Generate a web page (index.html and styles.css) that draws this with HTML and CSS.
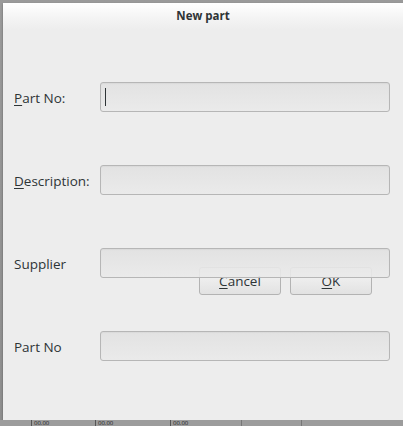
FILE: index.html
```html
<!DOCTYPE html>
<html>
<head>
<meta charset="utf-8">
<link rel="stylesheet" href="styles.css">
</head>
<body>
<div class="screen">
  <div class="dialog">
    <div class="titlebar">New part</div>
    <div class="form">
      <label class="label"><u>P</u>art No:</label>
      <div class="entry"><span class="caret"></span></div>
      <label class="label"><u>D</u>escription:</label>
      <div class="entry"></div>
      <label class="label">Supplier</label>
      <div class="entry"></div>
      <label class="label">Part No</label>
      <div class="entry"></div>
    </div>
    <div class="buttons">
      <div class="btn"><u>C</u>ancel</div>
      <div class="btn"><u>O</u>K</div>
    </div>
  </div>
  <div class="under">
    <span class="cell c1">00.00</span>
    <span class="cell c2">00.00</span>
    <span class="cell c3">00.00</span>
    <span class="cell c4"></span>
    <span class="cell c5"></span>
  </div>
</div>
</body>
</html>
```
FILE: styles.css
```css
html, body {
  margin: 0;
  padding: 0;
  width: 403px;
  height: 426px;
  overflow: hidden;
}
body {
  background: #8a8a8a;
  font-family: "Open Sans", "DejaVu Sans", sans-serif;
}
.screen {
  width: 403px;
  height: 426px;
  display: flex;
  flex-direction: column;
  background: linear-gradient(#9a9a9a, #8e8e8e);
}
.dialog {
  position: relative;
  margin: 3px 0 0 3px;
  width: 400px;
  height: 417px;
  background: #ededed;
  box-shadow: 0 1px 2px rgba(0,0,0,0.35);
  display: flex;
  flex-direction: column;
}
.titlebar {
  height: 25px;
  padding-bottom: 2px;
  display: flex;
  align-items: center;
  justify-content: center;
  font-weight: bold;
  font-size: 11.5px;
  color: #2e3436;
  background: linear-gradient(#ffffff, #f3f3f3 60%, #ededed);
}
.form {
  display: grid;
  grid-template-columns: 86px 290px;
  grid-auto-rows: 30px;
  row-gap: 53px;
  padding: 52px 0 0 11px;
  align-items: center;
}
.label {
  font-size: 13.5px;
  color: #2e3436;
  padding-top: 2px;
}
.label u {
  text-decoration-thickness: 1px;
  text-underline-offset: 2px;
}
.entry {
  position: relative;
  z-index: 2;
  box-sizing: border-box;
  height: 30px;
  border: 1px solid #b6b6b6;
  border-radius: 3px;
  background: linear-gradient(rgba(225,225,225,0.9), rgba(234,234,234,0.9));
  box-shadow: inset 0 1px 1px rgba(0,0,0,0.04);
}
.caret {
  position: absolute;
  left: 4px;
  top: 5px;
  width: 1px;
  height: 18px;
  background: #2e3436;
}
.buttons {
  position: absolute;
  left: 196px;
  top: 264px;
  z-index: 1;
  display: flex;
  gap: 9px;
}
.btn {
  box-sizing: border-box;
  width: 82px;
  height: 28px;
  border: 1px solid #b3b3b3;
  border-radius: 3px;
  background: linear-gradient(#f6f6f6, #e2e2e2);
  display: flex;
  align-items: center;
  justify-content: center;
  padding-bottom: 1px;
  font-size: 13.5px;
  color: #2e3436;
}
.btn u {
  text-decoration-thickness: 1px;
  text-underline-offset: 2px;
}
.under {
  position: relative;
  flex: 1;
  background: #9c9c9c;
}
.cell {
  position: absolute;
  top: 0;
  height: 6px;
  border-left: 1px solid #555;
  font-size: 6px;
  line-height: 6px;
  color: #222;
  padding-left: 2px;
}
.c1 { left: 31px; }
.c2 { left: 95px; }
.c3 { left: 170px; }
.c4 { left: 241px; border-left-color: #777; }
.c5 { left: 301px; border-left-color: #777; }
```
